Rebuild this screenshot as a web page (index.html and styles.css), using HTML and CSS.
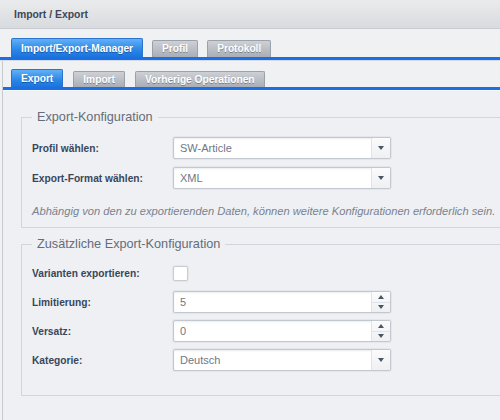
FILE: index.html
```html
<!DOCTYPE html>
<html>
<head>
    <title>Import / Export</title>
    <link rel="stylesheet" href="styles.css">
</head>
<body>
    <div class="window">
        <div class="window-title">Import / Export</div>

        <div class="tab-bar">
            <span class="tab active">Import/Export-Manager</span>
            <span class="tab">Profil</span>
            <span class="tab">Protokoll</span>
        </div>

        <div class="tab-body">
            <div class="tab-bar sub">
                <span class="tab active">Export</span>
                <span class="tab">Import</span>
                <span class="tab">Vorherige Operationen</span>
            </div>

            <div class="form-panel">
                <fieldset>
                    <legend>Export-Konfiguration</legend>
                    <div class="row">
                        <label>Profil wählen:</label>
                        <div class="field">
                            <span class="value">SW-Article</span>
                            <span class="trigger"><i class="arrow down"></i></span>
                        </div>
                    </div>
                    <div class="row">
                        <label>Export-Format wählen:</label>
                        <div class="field">
                            <span class="value">XML</span>
                            <span class="trigger"><i class="arrow down"></i></span>
                        </div>
                    </div>
                    <p class="hint">Abhängig von den zu exportierenden Daten, können weitere Konfigurationen erforderlich sein.</p>
                </fieldset>

                <fieldset class="extra">
                    <legend>Zusätzliche Export-Konfiguration</legend>
                    <div class="row">
                        <label>Varianten exportieren:</label>
                        <span class="checkbox"></span>
                    </div>
                    <div class="row">
                        <label>Limitierung:</label>
                        <div class="field">
                            <span class="value">5</span>
                            <span class="spinner">
                                <span><i class="arrow up"></i></span>
                                <span><i class="arrow down"></i></span>
                            </span>
                        </div>
                    </div>
                    <div class="row">
                        <label>Versatz:</label>
                        <div class="field">
                            <span class="value">0</span>
                            <span class="spinner">
                                <span><i class="arrow up"></i></span>
                                <span><i class="arrow down"></i></span>
                            </span>
                        </div>
                    </div>
                    <div class="row">
                        <label>Kategorie:</label>
                        <div class="field">
                            <span class="value">Deutsch</span>
                            <span class="trigger"><i class="arrow down"></i></span>
                        </div>
                    </div>
                </fieldset>
            </div>
        </div>
    </div>
</body>
</html>
```

FILE: styles.css
```css
body {
    margin: 0;
    font-family: "Liberation Sans", Arial, sans-serif;
    background: #eef0f3;
}
.window {
    width: 500px;
    height: 420px;
    overflow: hidden;
    display: flex;
    flex-direction: column;
    background: #f0f1f2;
}
.window-title {
    height: 28px;
    line-height: 29px;
    padding-left: 14px;
    font-size: 10.4px;
    font-weight: bold;
    color: #3e4756;
    background: linear-gradient(#eaebed, #d8dbdf);
    border-bottom: 1px solid #c9cdd3;
}

/* tab strips */
.tab-bar {
    display: flex;
    align-items: flex-end;
    gap: 9px;
    height: 19px;
    padding: 9px 0 0 11px;
    border-bottom: 3px solid #1c6ee6;
    box-shadow: 0 1px 0 #d5dbe4;
}
.tab-bar.sub {
    height: 18px;
    padding: 8px 0 0 8px;
    gap: 10px;
}
.tab {
    height: 16px;
    line-height: 16px;
    padding: 0 9px;
    font-size: 10.2px;
    font-weight: bold;
    color: #fff;
    text-shadow: 0 1px 0 rgba(60, 70, 85, 0.5);
    background: linear-gradient(#cdd0d5, #a9aeb6);
    border: 1px solid #9ba1aa;
    border-bottom: none;
    border-radius: 2px 2px 0 0;
}
.tab.active {
    height: 18px;
    line-height: 19px;
    background: linear-gradient(#62b0f7, #2a86e6 60%, #1b74dc);
    border-color: #2c72cf;
    text-shadow: 0 1px 0 rgba(10, 60, 140, 0.6);
}
.tab-bar.sub .tab {
    height: 15px;
    line-height: 16px;
}
.tab-bar.sub .tab.active {
    height: 17px;
    line-height: 18px;
}
.tab-body {
    flex: 1;
    margin: 1px 0 0 2px;
    border-left: 1px solid #c6cbd2;
    display: flex;
    flex-direction: column;
}

/* form area */
.form-panel {
    flex: 1;
    padding: 18px 0 0 18px;
    background: #eef0f3;
    border-top: 1px solid #f8f9fa;
}
fieldset {
    width: 520px;
    margin: 0;
    padding: 12px 10px 9px;
    border: 1px solid #d2d6dc;
}
fieldset.extra {
    margin-top: 8px;
    padding-top: 10px;
    padding-bottom: 24px;
}
legend {
    padding: 0 5px;
    font-size: 12.7px;
    line-height: 16px;
    color: #646c7a;
}
.row {
    display: flex;
    align-items: center;
    height: 22px;
    margin-bottom: 8px;
}
.extra .row {
    margin-bottom: 7px;
}
.row:last-of-type {
    margin-bottom: 0;
}
label {
    width: 141px;
    font-size: 10.2px;
    font-weight: bold;
    color: #3a465a;
}
.field {
    width: 216px;
    height: 20px;
    display: flex;
    background: #fff;
    border: 1px solid #c3c8ce;
    border-radius: 2px;
    box-shadow: 0 0 0 1px #e3e6ea, inset 0 1px 2px rgba(0, 0, 0, 0.08);
}
.value {
    flex: 1;
    padding-left: 6px;
    line-height: 20px;
    font-size: 11px;
    color: #6d7888;
}
.trigger,
.spinner {
    width: 18px;
    border-left: 1px solid #e0e3e7;
    background: linear-gradient(#fbfbfc, #eef0f2);
}
.trigger {
    display: flex;
    align-items: center;
    justify-content: center;
}
.spinner {
    display: flex;
    flex-direction: column;
}
.spinner span {
    flex: 1;
    display: flex;
    align-items: center;
    justify-content: center;
}
.spinner span + span {
    border-top: 1px solid #e0e3e7;
}
.arrow {
    width: 0;
    height: 0;
    border-left: 3.5px solid transparent;
    border-right: 3.5px solid transparent;
}
.arrow.down {
    border-top: 4px solid #4a5564;
}
.arrow.up {
    border-bottom: 4px solid #4a5564;
}
.checkbox {
    width: 13px;
    height: 13px;
    background: #fff;
    border: 1px solid #c8ccd2;
    border-radius: 2px;
    box-shadow: 0 0 0 1px #e4e7ea;
}
.hint {
    margin: 15px 0 0;
    line-height: 14px;
    font-size: 11.15px;
    font-style: italic;
    color: #7a828e;
}
```
